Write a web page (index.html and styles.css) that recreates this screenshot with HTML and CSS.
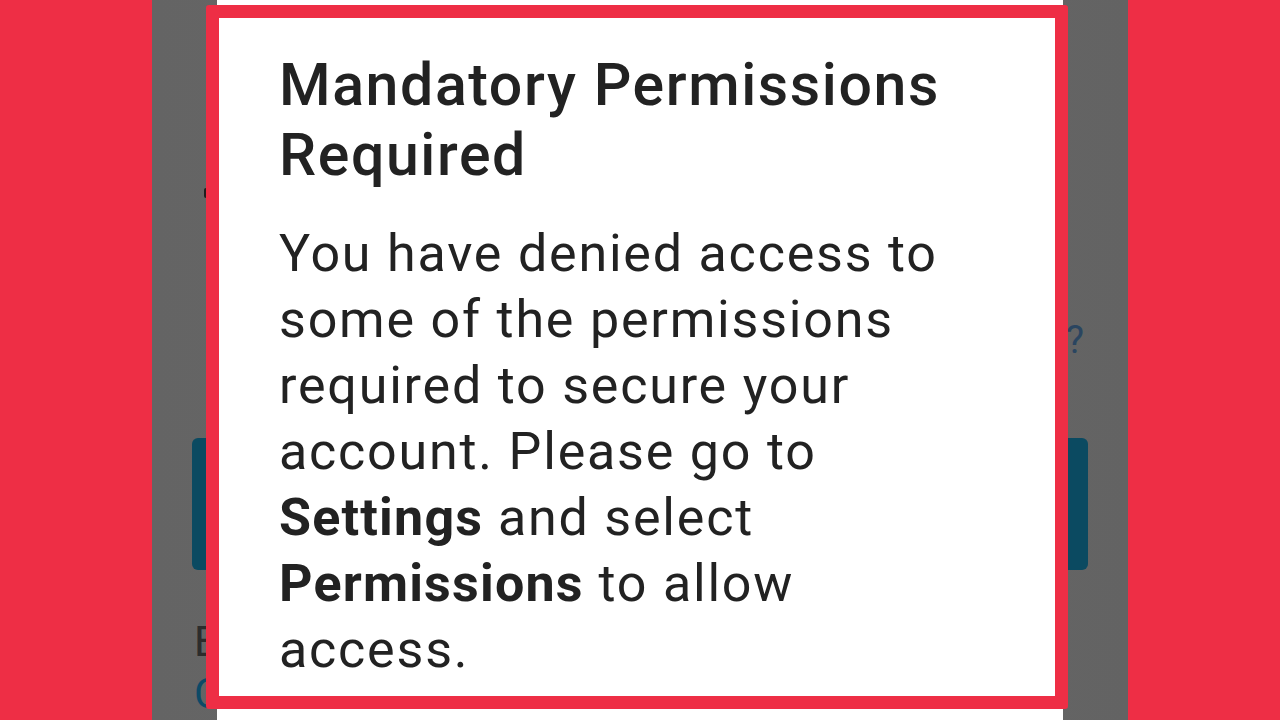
FILE: index.html
```html
<!DOCTYPE html>
<html lang="en">
<head>
<meta charset="utf-8">
<title>Mandatory Permissions Required</title>
<link rel="stylesheet" href="styles.css">
</head>
<body>
<div class="stage">
  <div class="screen">
    <div class="app">
      <div class="mark"></div>
      <div class="help-row"><span class="help">?</span></div>
      <div class="primary-btn"></div>
      <div class="app-text">
        <span class="line-e">E</span>
        <span class="line-c">C</span>
      </div>
    </div>
    <div class="dialog">
      <h1 class="title">Mandatory Permissions Required</h1>
      <p class="message">You have denied access to some of the permissions required to secure your account. Please go to <b>Settings</b> and select <b>Permissions</b> to allow access.</p>
    </div>
    <div class="highlight"></div>
  </div>
</div>
</body>
</html>
```
FILE: styles.css
```css
* { box-sizing: border-box; }
html, body { margin: 0; padding: 0; }
body {
  width: 1280px;
  height: 720px;
  overflow: hidden;
  background: #ee2e45;
  font-family: Roboto, "Noto Sans", "Liberation Sans", sans-serif;
}
.stage {
  display: flex;
  justify-content: center;
  height: 720px;
}
.screen {
  position: relative;
  width: 976px;
  height: 720px;
  background: linear-gradient(90deg, #646464 0%, #686868 50%, #636363 100%);
}
.app {
  height: 720px;
  padding: 0 40px;
  display: flex;
  flex-direction: column;
}
.mark {
  margin-top: 188px;
  margin-left: 12px;
  width: 4px;
  height: 10px;
  background: #1e1e1e;
  border-radius: 2px;
}
.help-row {
  margin-top: 120px;
  display: flex;
  justify-content: flex-end;
  padding-right: 4px;
}
.help {
  font-size: 38px;
  line-height: 44px;
  color: #2a4560;
}
.primary-btn {
  margin-top: 76px;
  height: 137px;
  background: #0b4a61;
  border-radius: 6px;
}
.app-text {
  display: flex;
  flex-direction: column;
  padding-left: 2px;
  margin-top: 46px;
  font-size: 42px;
  line-height: 52px;
}
.line-e { color: #2c2c2c; }
.line-c { color: #0d4a66; }
.dialog {
  position: absolute;
  top: 0;
  left: 65px;
  width: 846px;
  height: 720px;
  background: #ffffff;
  padding: 50px 0 0 62px;
  color: #222222;
}
.title {
  margin: 0;
  width: 740px;
  font-size: 59px;
  line-height: 70px;
  font-weight: 500;
  letter-spacing: 1.6px;
}
.message {
  margin: 31px 0 0;
  width: 690px;
  font-size: 52px;
  line-height: 66px;
  font-weight: 400;
  letter-spacing: 1.8px;
}
.message b { font-weight: 700; letter-spacing: 1.2px; }
.highlight {
  position: absolute;
  top: 5px;
  left: 54px;
  width: 862px;
  height: 704px;
  border: 13px solid #ee2e45;
  border-radius: 3px;
}
```
